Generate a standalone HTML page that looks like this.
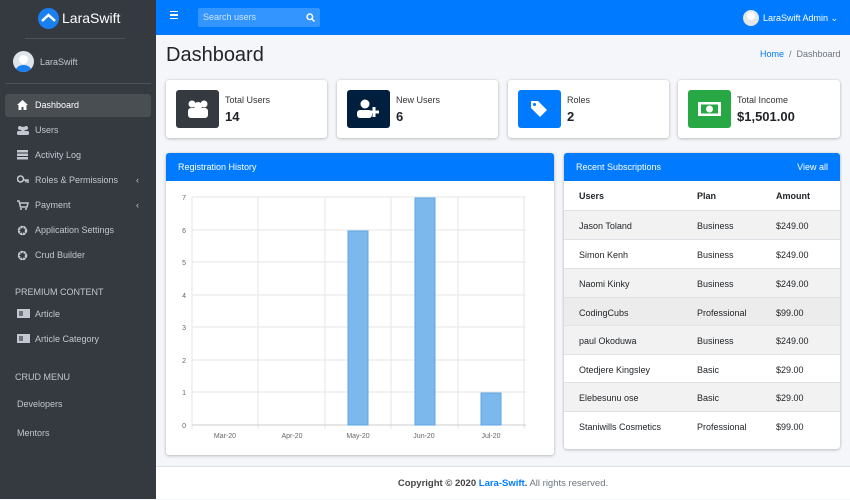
<!DOCTYPE html>
<html><head><meta charset="utf-8"><style>
*{box-sizing:border-box;margin:0;padding:0}
body{width:850px;height:499px;overflow:hidden;font-family:"Liberation Sans",sans-serif;background:#f4f6f9;position:relative;font-size:9px;color:#212529}
.a{position:absolute}
#sb{left:0;top:0;width:156px;height:499px;background:#343a40;color:#c2c7d0}
.nav{position:absolute;left:5px;width:146px;height:23px;border-radius:3px;font-size:9px;color:#c2c7d0;padding-left:30px;line-height:23px}
.nav svg{position:absolute;left:12px;top:6px}
.card{position:absolute;background:#fff;border-radius:3px;box-shadow:0 0 2px rgba(0,0,0,.13),0 1px 3px rgba(0,0,0,.2)}
.ib{position:absolute;left:10px;top:10px;width:43px;height:38px;border-radius:3px}
.st{position:absolute;left:59px;top:15px;font-size:9px;color:#333}
.sv{position:absolute;left:59px;top:29px;font-size:13px;font-weight:bold}
.row{position:absolute;left:0;width:276px;height:29px;line-height:30px;font-size:9px;border-top:1px solid #dee2e6}
.row span{position:absolute}
</style></head><body>
<div id="sb" class="a">
 <div class="a" style="left:38px;top:8px;width:21px;height:21px;border-radius:50%;background:#1a7ff0"></div>
 <svg class="a" style="left:41px;top:13px" width="15" height="10"><path d="M1 8 L7.5 2 L14 8" stroke="#fff" stroke-width="2.5" fill="none"/></svg>
 <div class="a" style="left:62px;top:10px;font-size:14px;color:#fff">LaraSwift</div>
 <div class="a" style="left:25px;top:38px;width:100px;height:1px;background:#4b545c"></div>
 <div class="a" style="left:13px;top:51px;width:21px;height:21px;border-radius:50%;background:#dfe3ea;overflow:hidden"><div class="a" style="left:6px;top:4px;width:9px;height:9px;border-radius:50%;background:#fff"></div><div class="a" style="left:3px;top:14px;width:15px;height:10px;border-radius:50%;background:#1a7ff0"></div></div>
 <div class="a" style="left:40px;top:57px;font-size:9px">LaraSwift</div>
 <div class="a" style="left:5px;top:83px;width:146px;height:1px;background:#4b545c"></div>
 <div class="nav" style="top:94px;background:#494e53;color:#fff"><svg width="11" height="10"><path d="M5.5 0 L11 5 H9.5 V10 H6.5 V7 H4.5 V10 H1.5 V5 H0Z" fill="#fff"/></svg>Dashboard</div>
 <div class="nav" style="top:119px"><svg width="12" height="10"><circle cx="3" cy="3" r="2" fill="#c2c7d0"/><circle cx="9" cy="3" r="2" fill="#c2c7d0"/><circle cx="6" cy="4" r="2.3" fill="#c2c7d0"/><rect x="0" y="6" width="12" height="4" rx="1.5" fill="#c2c7d0"/></svg>Users</div>
 <div class="nav" style="top:144px"><svg width="11" height="10"><rect y="0" width="11" height="2.5" fill="#c2c7d0"/><rect y="3.5" width="11" height="2.5" fill="#c2c7d0"/><rect y="7" width="11" height="2.5" fill="#c2c7d0"/></svg>Activity Log</div>
 <div class="nav" style="top:169px"><svg width="12" height="10"><circle cx="3.5" cy="4" r="3" fill="none" stroke="#c2c7d0" stroke-width="1.6"/><path d="M6 5 H11 V8 M9 5 V7.5" stroke="#c2c7d0" stroke-width="1.5" fill="none"/></svg>Roles &amp; Permissions<span class="a" style="left:131px;top:0">‹</span></div>
 <div class="nav" style="top:194px"><svg width="12" height="10"><path d="M0 1 H2 L3.5 7 H10 L11 3 H3" stroke="#c2c7d0" stroke-width="1.5" fill="none"/><circle cx="4" cy="9" r="1" fill="#c2c7d0"/><circle cx="9" cy="9" r="1" fill="#c2c7d0"/></svg>Payment<span class="a" style="left:131px;top:0">‹</span></div>
 <div class="nav" style="top:219px"><svg width="11" height="11"><circle cx="5.5" cy="5.5" r="3.6" fill="none" stroke="#c2c7d0" stroke-width="2.4" stroke-dasharray="2 1"/><circle cx="5.5" cy="5.5" r="4" fill="none" stroke="#c2c7d0" stroke-width="1"/></svg>Application Settings</div>
 <div class="nav" style="top:244px"><svg width="11" height="11"><circle cx="5.5" cy="5.5" r="3.6" fill="none" stroke="#c2c7d0" stroke-width="2.4" stroke-dasharray="2 1"/><circle cx="5.5" cy="5.5" r="4" fill="none" stroke="#c2c7d0" stroke-width="1"/></svg>Crud Builder</div>
 <div class="a" style="left:15px;top:287px;font-size:9px">PREMIUM CONTENT</div>
 <div class="nav" style="top:303px"><svg width="13" height="9"><rect width="13" height="9" fill="#c2c7d0"/><rect x="2" y="2" width="4" height="5" fill="#6c757d"/></svg>Article</div>
 <div class="nav" style="top:328px"><svg width="13" height="9"><rect width="13" height="9" fill="#c2c7d0"/><rect x="2" y="2" width="4" height="5" fill="#6c757d"/></svg>Article Category</div>
 <div class="a" style="left:15px;top:372px;font-size:9px">CRUD MENU</div>
 <div class="a" style="left:17px;top:399px;font-size:9px">Developers</div>
 <div class="a" style="left:17px;top:428px;font-size:9px">Mentors</div>
</div>
<div class="a" style="left:156px;top:0;width:694px;height:35px;background:#007bff"></div>
<div class="a" style="left:170px;top:11px;width:8px;height:8px;border-top:1.5px solid #fff;border-bottom:1.5px solid #fff"><div style="margin-top:2px;height:1.5px;background:#fff"></div></div>
<div class="a" style="left:198px;top:8px;width:122px;height:19px;background:#3395ff;border-radius:2px;color:#cfe4ff;font-size:9px;line-height:19px;padding-left:5px">Search users</div>
<svg class="a" style="left:306px;top:13px" width="9" height="9"><circle cx="3.8" cy="3.8" r="2.8" fill="none" stroke="#fff" stroke-width="1.4"/><path d="M6 6 L8.5 8.5" stroke="#fff" stroke-width="1.5"/></svg>
<div class="a" style="left:743px;top:10px;width:16px;height:16px;border-radius:50%;background:#e3e6ea"><div class="a" style="left:4px;top:2px;width:8px;height:8px;border-radius:50%;background:#fff"></div></div>
<div class="a" style="left:763px;top:13px;font-size:9px;color:#fff">LaraSwift Admin ⌄</div>
<div class="a" style="left:166px;top:44px;font-size:20px;color:#212529">Dashboard</div>
<div class="a" style="left:760px;top:49px;font-size:9px;color:#6c757d"><span style="color:#007bff">Home</span> &nbsp;/&nbsp; Dashboard</div>

<div class="card" style="left:166px;top:80px;width:161px;height:58px"><div class="ib" style="background:#343a40"></div><svg class="a" style="left:21px;top:19px" width="22" height="20"><circle cx="5" cy="5" r="3.5" fill="#fff"/><circle cx="17" cy="5" r="3.5" fill="#fff"/><circle cx="11" cy="7" r="4" fill="#fff"/><rect x="1" y="9" width="20" height="10" rx="3" fill="#fff"/></svg><div class="st">Total Users</div><div class="sv">14</div></div>
<div class="card" style="left:337px;top:80px;width:161px;height:58px"><div class="ib" style="background:#001f3f"></div><svg class="a" style="left:20px;top:19px" width="22" height="20"><circle cx="8" cy="5" r="4.5" fill="#fff"/><rect x="0" y="11" width="15" height="8" rx="3" fill="#fff"/><path d="M17 8 V18 M12 13 H22" stroke="#fff" stroke-width="3"/></svg><div class="st">New Users</div><div class="sv">6</div></div>
<div class="card" style="left:508px;top:80px;width:161px;height:58px"><div class="ib" style="background:#007bff"></div><svg class="a" style="left:22px;top:20px" width="18" height="18"><path d="M1 1 H8 L17 10 L10 17 L1 8Z" fill="#fff"/><circle cx="4.5" cy="4.5" r="1.5" fill="#007bff"/></svg><div class="st">Roles</div><div class="sv">2</div></div>
<div class="card" style="left:678px;top:80px;width:162px;height:58px"><div class="ib" style="background:#28a745"></div><svg class="a" style="left:20px;top:22px" width="23" height="14"><rect x="0" y="0" width="23" height="14" fill="#fff"/><rect x="3" y="2.5" width="17" height="9" fill="#28a745"/><circle cx="11.5" cy="7" r="3.5" fill="#fff"/></svg><div class="st">Total Income</div><div class="sv">$1,501.00</div></div>

<div class="card" style="left:166px;top:153px;width:388px;height:302px">
 <div class="a" style="left:0;top:0;width:388px;height:28px;background:#007bff;border-radius:3px 3px 0 0;color:#fff;font-size:9px;line-height:28px;padding-left:12px">Registration History</div>
 <svg class="a" style="left:0;top:28px" width="388" height="274" font-family="Liberation Sans" font-size="7" fill="#666">
  <g stroke="#e5e5e5" stroke-width="1">
   <line x1="26" y1="16" x2="360" y2="16"/><line x1="26" y1="49" x2="360" y2="49"/><line x1="26" y1="81" x2="360" y2="81"/><line x1="26" y1="114" x2="360" y2="114"/><line x1="26" y1="146" x2="360" y2="146"/><line x1="26" y1="179" x2="360" y2="179"/><line x1="26" y1="211" x2="360" y2="211"/>
   <line x1="26" y1="16" x2="26" y2="248"/><line x1="92" y1="16" x2="92" y2="248"/><line x1="159" y1="16" x2="159" y2="248"/><line x1="225" y1="16" x2="225" y2="248"/><line x1="292" y1="16" x2="292" y2="248"/><line x1="358" y1="16" x2="358" y2="248"/>
  </g>
  <line x1="26" y1="244" x2="360" y2="244" stroke="#ccc"/>
  <g text-anchor="end"><text x="20" y="19">7</text><text x="20" y="52">6</text><text x="20" y="84">5</text><text x="20" y="117">4</text><text x="20" y="149">3</text><text x="20" y="182">2</text><text x="20" y="214">1</text><text x="20" y="247">0</text></g>
  <g fill="#7cb8ec" stroke="#5ea6e4"><rect x="182" y="50" width="20" height="194"/><rect x="249" y="17" width="20" height="227"/><rect x="315" y="212" width="20" height="32"/></g>
  <g text-anchor="middle"><text x="59" y="257">Mar-20</text><text x="126" y="257">Apr-20</text><text x="192" y="257">May-20</text><text x="258" y="257">Jun-20</text><text x="325" y="257">Jul-20</text></g>
 </svg>
</div>

<div class="card" style="left:564px;top:153px;width:276px;height:296px;overflow:hidden">
 <div class="a" style="left:0;top:0;width:276px;height:28px;background:#007bff;color:#fff;font-size:9px;line-height:28px;padding-left:12px">Recent Subscriptions<span class="a" style="right:12px;top:0">View all</span></div>
 <div class="a" style="left:0;top:28px;width:276px;height:29px;line-height:31px;font-size:9px;font-weight:bold"><span class="a" style="left:15px">Users</span><span class="a" style="left:133px">Plan</span><span class="a" style="left:212px">Amount</span></div>
 <div class="row" style="top:57px;background:#f2f2f2"><span style="left:15px">Jason Toland</span><span style="left:133px">Business</span><span style="left:212px">$249.00</span></div>
 <div class="row" style="top:86px"><span style="left:15px">Simon Kenh</span><span style="left:133px">Business</span><span style="left:212px">$249.00</span></div>
 <div class="row" style="top:115px;background:#f2f2f2"><span style="left:15px">Naomi Kinky</span><span style="left:133px">Business</span><span style="left:212px">$249.00</span></div>
 <div class="row" style="top:144px;background:#ececec"><span style="left:15px">CodingCubs</span><span style="left:133px">Professional</span><span style="left:212px">$99.00</span></div>
 <div class="row" style="top:172px;background:#f2f2f2"><span style="left:15px">paul Okoduwa</span><span style="left:133px">Business</span><span style="left:212px">$249.00</span></div>
 <div class="row" style="top:201px"><span style="left:15px">Otedjere Kingsley</span><span style="left:133px">Basic</span><span style="left:212px">$29.00</span></div>
 <div class="row" style="top:229px;background:#f2f2f2"><span style="left:15px">Elebesunu ose</span><span style="left:133px">Basic</span><span style="left:212px">$29.00</span></div>
 <div class="row" style="top:258px"><span style="left:15px">Staniwills Cosmetics</span><span style="left:133px">Professional</span><span style="left:212px">$99.00</span></div>
</div>

<div class="a" style="left:156px;top:466px;width:694px;height:33px;background:#fff;border-top:1px solid #dee2e6;text-align:center;line-height:33px;font-size:9.5px;color:#6c757d"><b style="color:#444">Copyright © 2020 <span style="color:#007bff">Lara-Swift</span>.</b> All rights reserved.</div>
</body></html>
